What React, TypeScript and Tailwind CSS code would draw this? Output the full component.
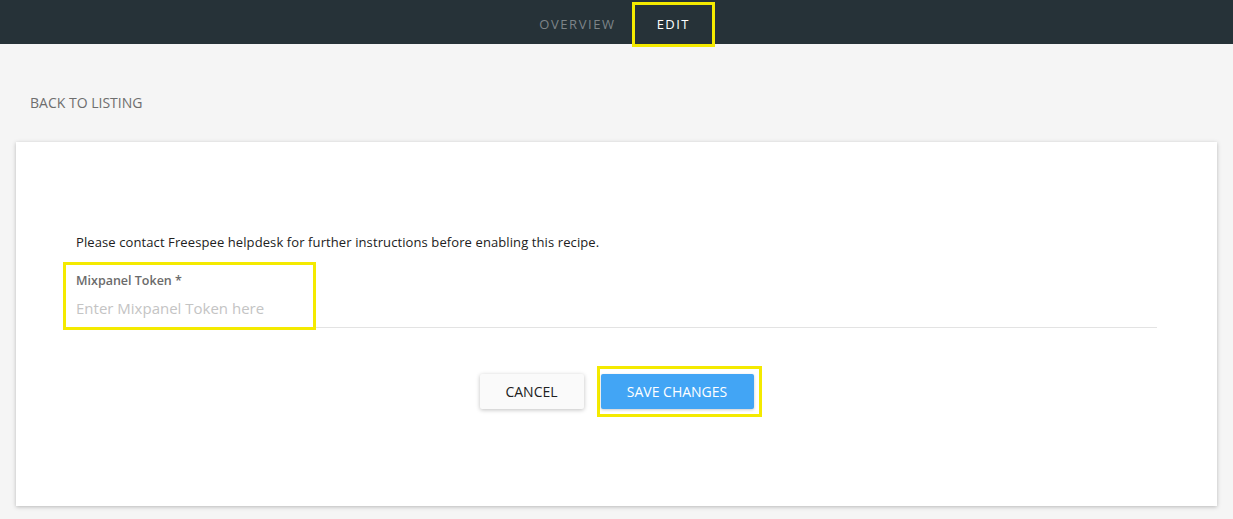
import React from "react";

const App: React.FC = () => {
  return (
    <div
      className="min-h-[519px] bg-[#f5f5f5]"
      style={{ fontFamily: "'Open Sans', Lato, sans-serif" }}
    >
      <div className="flex h-[44px] justify-center bg-[#263238]">
        <div className="flex items-stretch pl-[5px]">
          <button className="px-[16px] pt-[6px] text-[13px] tracking-[1.6px] text-[#7d8488]">
            OVERVIEW
          </button>
          <div className="mt-[2px] -mb-[3px] flex items-center border-[3px] border-[#f4ea00] px-[22px] text-[13px] tracking-[1.4px] text-white">
            EDIT
          </div>
        </div>
      </div>

      <div className="px-[16px]">
        <div className="pl-[14px] pt-[48px] pb-[29px] text-[14px] text-[#6e6e6e]">
          BACK TO LISTING
        </div>

        <div className="h-[364px] bg-white px-[60px] pt-[91px] shadow-[0_1px_4px_rgba(0,0,0,0.25)]">
          <p className="text-[13px] tracking-[0.1px] text-[#212121]">
            Please contact Freespee helpdesk for further instructions before
            enabling this recipe.
          </p>

          <div className="relative mt-[19px] border-b border-[#e3e3e3] pb-[7px]">
            <div className="absolute -left-[13px] -top-[10px] h-[68px] w-[253px] border-[3px] border-[#f4ea00]" />
            <label className="block text-[12.5px] font-semibold text-[#6b6b6b]">
              Mixpanel Token *
            </label>
            <input
              className="mt-[7px] w-full bg-transparent text-[15px] text-[#333] outline-none placeholder:text-[#c4c4c4]"
              placeholder="Enter Mixpanel Token here"
            />
          </div>

          <div className="mt-[46px] flex justify-center gap-[17px]">
            <button className="h-[35px] w-[104px] rounded-[2px] bg-[#fafafa] text-[14px] text-[#212121] shadow-[0_1px_4px_rgba(0,0,0,0.25)]">
              CANCEL
            </button>
            <div className="relative">
              <div className="absolute -left-[4px] -top-[8px] h-[51px] w-[165px] border-[3px] border-[#f4ea00]" />
              <button className="relative h-[35px] w-[153px] rounded-[2px] bg-[#42a5f5] text-[14px] text-white shadow-[0_1px_3px_rgba(0,0,0,0.2)]">
                SAVE CHANGES
              </button>
            </div>
          </div>
        </div>
      </div>
    </div>
  );
};

export default App;
